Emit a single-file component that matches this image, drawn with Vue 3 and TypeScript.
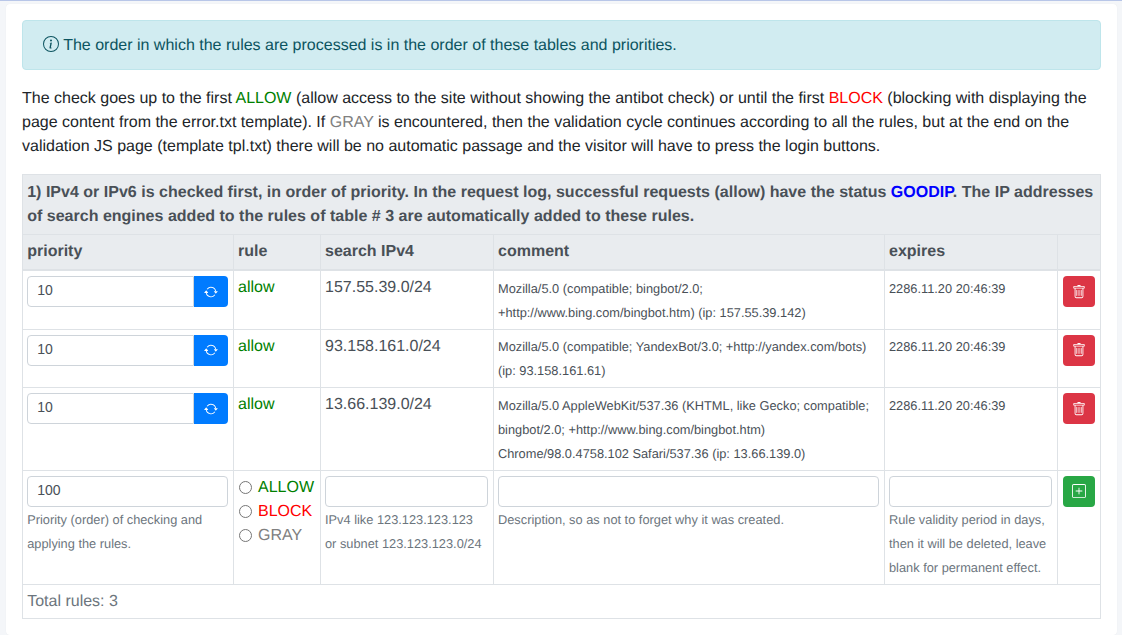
<script setup lang="ts">
interface Rule { ip: string; comment: string; h: string }
const rules: Rule[] = [
  { ip: '157.55.39.0/24', comment: 'Mozilla/5.0 (compatible; bingbot/2.0; +http://www.bing.com/bingbot.htm) (ip: 157.55.39.142)', h: 'r2' },
  { ip: '93.158.161.0/24', comment: 'Mozilla/5.0 (compatible; YandexBot/3.0; +http://yandex.com/bots) (ip: 93.158.161.61)', h: 'r2' },
  { ip: '13.66.139.0/24', comment: 'Mozilla/5.0 AppleWebKit/537.36 (KHTML, like Gecko; compatible; bingbot/2.0; +http://www.bing.com/bingbot.htm) Chrome/98.0.4758.102 Safari/537.36 (ip: 13.66.139.0)', h: 'r3' }
]
</script>

<template>
  <div class="page">
    <div class="card">
      <div class="alert">
        <svg class="info" viewBox="0 0 16 16" fill="currentColor"><path d="M8 15A7 7 0 1 1 8 1a7 7 0 0 1 0 14zm0 1A8 8 0 1 0 8 0a8 8 0 0 0 0 16z"/><path d="m8.93 6.588-2.29.287-.082.38.45.083c.294.07.352.176.288.469l-.738 3.468c-.194.897.105 1.319.808 1.319.545 0 1.178-.252 1.465-.598l.088-.416c-.2.176-.492.246-.686.246-.275 0-.375-.193-.304-.533L8.93 6.588zM9 4.5a1 1 0 1 1-2 0 1 1 0 0 1 2 0z"/></svg>
        The order in which the rules are processed is in the order of these tables and priorities.
      </div>
      <p class="intro">The check goes up to the first <span class="green">ALLOW</span> (allow access to the site without showing the antibot check) or until the first <span class="red">BLOCK</span> (blocking with displaying the page content from the error.txt template). If <span class="gray">GRAY</span> is encountered, then the validation cycle continues according to all the rules, but at the end on the validation JS page (template tpl.txt) there will be no automatic passage and the visitor will have to press the login buttons.</p>
      <table class="rules">
        <colgroup>
          <col class="c1" /><col class="c2" /><col class="c3" /><col class="c4" /><col class="c5" /><col class="c6" />
        </colgroup>
        <thead>
          <tr class="title"><th colspan="6">1) IPv4 or IPv6 is checked first, in order of priority. In the request log, successful requests (allow) have the status <span class="blue">GOODIP</span>. The IP addresses of search engines added to the rules of table # 3 are automatically added to these rules.</th></tr>
          <tr class="heads"><th>priority</th><th>rule</th><th>search IPv4</th><th>comment</th><th>expires</th><th></th></tr>
        </thead>
        <tbody>
          <tr v-for="r in rules" :key="r.ip" :class="r.h">
            <td>
              <div class="group">
                <input class="ctl" type="text" value="10" />
                <button class="btn blue-btn" type="button">
                  <svg viewBox="0 0 16 16" fill="#fff"><path d="M11.534 7h3.932a.25.25 0 0 1 .192.41l-1.966 2.36a.25.25 0 0 1-.384 0l-1.966-2.36a.25.25 0 0 1 .192-.41zm-11 2h3.932a.25.25 0 0 0 .192-.41L2.692 6.23a.25.25 0 0 0-.384 0L.342 8.59A.25.25 0 0 0 .534 9z"/><path fill-rule="evenodd" d="M8 3c-1.552 0-2.94.707-3.857 1.818a.5.5 0 1 1-.771-.636A6.002 6.002 0 0 1 13.917 7H12.9A5.002 5.002 0 0 0 8 3zM3.1 9a5.002 5.002 0 0 0 8.757 2.182.5.5 0 1 1 .771.636A6.002 6.002 0 0 1 2.083 9H3.1z"/></svg>
                </button>
              </div>
            </td>
            <td class="green big">allow</td>
            <td class="big">{{ r.ip }}</td>
            <td class="small">{{ r.comment }}</td>
            <td class="small">2286.11.20 20:46:39</td>
            <td class="act">
              <button class="btn red-btn" type="button">
                <svg viewBox="0 0 16 16" fill="#fff"><path d="M5.5 5.5A.5.5 0 0 1 6 6v6a.5.5 0 0 1-1 0V6a.5.5 0 0 1 .5-.5zm2.5 0a.5.5 0 0 1 .5.5v6a.5.5 0 0 1-1 0V6a.5.5 0 0 1 .5-.5zm3 .5a.5.5 0 0 0-1 0v6a.5.5 0 0 0 1 0V6z"/><path fill-rule="evenodd" d="M14.5 3a1 1 0 0 1-1 1H13v9a2 2 0 0 1-2 2H5a2 2 0 0 1-2-2V4h-.5a1 1 0 0 1-1-1V2a1 1 0 0 1 1-1H6a1 1 0 0 1 1-1h2a1 1 0 0 1 1 1h3.5a1 1 0 0 1 1 1v1zM4.118 4 4 4.059V13a1 1 0 0 0 1 1h6a1 1 0 0 0 1-1V4.059L11.882 4H4.118zM2.5 3V2h11v1h-11z"/></svg>
              </button>
            </td>
          </tr>
          <tr class="add">
            <td>
              <input class="ctl full" type="text" value="100" />
              <div class="help">Priority (order) of checking and applying the rules.</div>
            </td>
            <td class="radios">
              <label><i class="radio"></i><span class="green">ALLOW</span></label>
              <label><i class="radio"></i><span class="red">BLOCK</span></label>
              <label><i class="radio"></i><span class="gray">GRAY</span></label>
            </td>
            <td>
              <input class="ctl full" type="text" />
              <div class="help">IPv4 like 123.123.123.123 or subnet 123.123.123.0/24</div>
            </td>
            <td>
              <input class="ctl full" type="text" />
              <div class="help">Description, so as not to forget why it was created.</div>
            </td>
            <td>
              <input class="ctl full" type="text" />
              <div class="help">Rule validity period in days, then it will be deleted, leave blank for permanent effect.</div>
            </td>
            <td class="act">
              <button class="btn green-btn" type="button">
                <svg viewBox="0 0 16 16" fill="#fff"><path d="M14 1a1 1 0 0 1 1 1v12a1 1 0 0 1-1 1H2a1 1 0 0 1-1-1V2a1 1 0 0 1 1-1h12zM2 0a2 2 0 0 0-2 2v12a2 2 0 0 0 2 2h12a2 2 0 0 0 2-2V2a2 2 0 0 0-2-2H2z"/><path d="M8 4a.5.5 0 0 1 .5.5v3h3a.5.5 0 0 1 0 1h-3v3a.5.5 0 0 1-1 0v-3h-3a.5.5 0 0 1 0-1h3v-3A.5.5 0 0 1 8 4z"/></svg>
              </button>
            </td>
          </tr>
          <tr><td colspan="6" class="total">Total rules: 3</td></tr>
        </tbody>
      </table>
    </div>
  </div>
</template>

<style>
html, body { margin: 0; background: #f4f6f9; overflow: hidden; }
</style>

<style scoped>
.page {
  height: 635px;
  box-sizing: border-box;
  border-top: 1px solid #b8c6e8;
  padding: 3px 5px 0 6px;
  font-family: "Liberation Sans", Arial, sans-serif;
  font-size: 16px;
  line-height: 24px;
  color: #212529;
  overflow: hidden;
  text-rendering: geometricPrecision;
}
.card {
  background: #fff;
  border-radius: 4px;
  height: 100%;
  box-sizing: border-box;
  padding: 16px 16px 0;
  box-shadow: 0 0 1px rgba(0, 0, 0, .08);
}
.alert {
  height: 50px;
  box-sizing: border-box;
  padding: 13px 20px 11px;
  background: #d1ecf1;
  border: 1px solid #bee5eb;
  border-radius: 4px;
  color: #0c5460;
}
.info { width: 16px; height: 16px; vertical-align: -2px; }
.intro { margin: 17px 0 15px; }
.green { color: green; }
.red { color: red; }
.gray { color: gray; }
.blue { color: #00f; }
.rules {
  width: 1078px;
  table-layout: fixed;
  border-collapse: collapse;
  color: #495057;
}
.c1 { width: 210.5px; }
.c2 { width: 87px; }
.c3 { width: 173px; }
.c4 { width: 391px; }
.c5 { width: 173px; }
.c6 { width: 43.5px; }
.rules th, .rules td {
  border: 1px solid #dee2e6;
  padding: 5px 5px 5px 4.5px;
  vertical-align: top;
  text-align: left;
}
.rules th { background: #e9ecef; font-weight: 700; }
.rules tr > :first-child { padding-left: 4.2px; }
.rules .title th { padding: 6px 0 5px 4.2px; letter-spacing: .012px; }
.heads th { border-bottom-width: 2px; height: 34px; box-sizing: border-box; }
.r2 td { padding-bottom: 4.5px; }
.rules td.act { padding-left: 5px; }
.rules td.small { padding-top: 5.5px; padding-bottom: 4px; }
.group { display: flex; }
.group .ctl { width: 100%; min-width: 0; flex: 1; border-radius: 4px 0 0 4px; }
.ctl {
  height: 31px;
  box-sizing: border-box;
  border: 1px solid #ced4da;
  border-radius: 4px;
  padding: 3px 9px 6px;
  font: 14px/20px "Liberation Sans", Arial, sans-serif;
  color: #495057;
  background: #fff;
  display: block;
  outline: none;
}
.full { width: 100%; }
.btn {
  width: 32.5px;
  height: 31px;
  padding: 0;
  border: 0;
  border-radius: 4px;
  display: flex;
  align-items: center;
  justify-content: center;
  flex: none;
}
.btn svg { width: 14px; height: 14px; }
.blue-btn { width: 34px; background: #007bff; border-radius: 0 4px 4px 0; }
.red-btn { background: #dc3545; }
.green-btn { background: #28a745; }
.big { font-size: 16px; line-height: 24px; }
.small { font-size: 12.8px; }
.help { font-size: 12.8px; color: #6c757d; margin-top: 1px; }
.add td { padding-bottom: 4px; }
.radios label { display: flex; align-items: center; height: 24px; }
.radio {
  width: 13px;
  height: 13px;
  box-sizing: border-box;
  border: 1px solid #767676;
  border-radius: 50%;
  margin: 0 6.5px 0 0;
  background: #fff;
}
.rules td.radios { padding: 5px 0 0 5px; }
.rules td.total { font-size: 16px; color: #6c757d; padding: 5px 5px 4px 4.2px; }
</style>
